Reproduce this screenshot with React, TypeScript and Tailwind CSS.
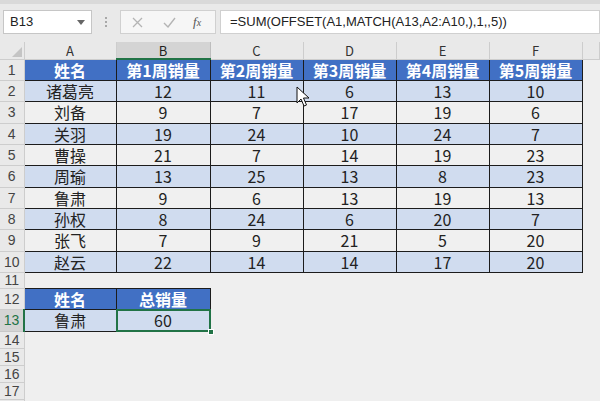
import React from 'react';

const FONT = '"Noto Sans CJK SC", "Liberation Sans", sans-serif';

const headers = ['姓名', '第1周销量', '第2周销量', '第3周销量', '第4周销量', '第5周销量'];

const rows: (string | number)[][] = [
  ['诸葛亮', 12, 11, 6, 13, 10],
  ['刘备', 9, 7, 17, 19, 6],
  ['关羽', 19, 24, 10, 24, 7],
  ['曹操', 21, 7, 14, 19, 23],
  ['周瑜', 13, 25, 13, 8, 23],
  ['鲁肃', 9, 6, 13, 19, 13],
  ['孙权', 8, 24, 6, 20, 7],
  ['张飞', 7, 9, 21, 5, 20],
  ['赵云', 22, 14, 14, 17, 20],
];

const rowHeights = ['h-[21px]', 'h-[22px]', 'h-[21px]', 'h-[21px]', 'h-[22px]', 'h-[21px]', 'h-[21px]', 'h-[22px]', 'h-[21px]'];

function RowHead({ n, active }: { n?: number; active?: boolean }) {
  return (
    <td
      className={`border-b border-r p-0 text-center text-[14px] leading-none ${
        active
          ? 'border-r-2 border-b-[#c8c8c8] border-r-[#217346] bg-[#d4d4d4] text-[#217346]'
          : 'border-[#cdcdcd] bg-[#e9e9e9] text-[#444]'
      }`}
      style={{ fontFamily: '"Liberation Sans", sans-serif' }}
    >
      {n}
    </td>
  );
}

function Blank() {
  return <td className="p-0" />;
}

function FormulaBar() {
  return (
    <div className="flex h-[42px] items-start border-t-4 border-[#d9d9d9] bg-[#e9e9e9] pt-[6px]">
      {/* name box */}
      <div className="ml-[3px] flex h-[24px] w-[89px] items-center justify-between border border-[#c6c6c6] bg-white pl-[6px] pr-[6px]">
        <span className="text-[13px] text-[#222]" style={{ fontFamily: '"Liberation Sans", sans-serif' }}>B13</span>
        <svg width="8" height="5" viewBox="0 0 8 5"><path d="M0 0h8L4 5z" fill="#666" /></svg>
      </div>
      {/* dots */}
      <div className="flex h-[24px] w-[28px] flex-col items-center justify-center gap-[2px]">
        <span className="h-[2px] w-[2px] bg-[#a8a8a8]" />
        <span className="h-[2px] w-[2px] bg-[#a8a8a8]" />
        <span className="h-[2px] w-[2px] bg-[#a8a8a8]" />
      </div>
      {/* buttons */}
      <div className="flex h-[24px] w-[96px] items-center border border-[#d0d0d0] bg-[#f6f6f6] pl-[11px]">
        <svg width="11" height="11" viewBox="0 0 11 11" className="mr-[20px]">
          <path d="M1 1l9 9M10 1l-9 9" stroke="#b4b4b4" strokeWidth="1.3" />
        </svg>
        <svg width="13" height="11" viewBox="0 0 13 11" className="mr-[17px]">
          <path d="M1 6l4 4 7-9" stroke="#b4b4b4" strokeWidth="1.4" fill="none" />
        </svg>
        <span className="text-[13px] italic text-[#555]" style={{ fontFamily: '"Liberation Serif", serif' }}>
          f<span className="text-[10px]">x</span>
        </span>
      </div>
      {/* formula */}
      <div className="ml-[4px] flex h-[24px] flex-1 items-center border border-[#d0d0d0] bg-white pl-[9px]">
        <span className="text-[13px] text-[#222]" style={{ fontFamily: '"Liberation Sans", sans-serif' }}>
          =SUM(OFFSET(A1,MATCH(A13,A2:A10,),1,,5))
        </span>
      </div>
    </div>
  );
}

export default function App() {
  return (
    <div className="relative h-[401px] w-[600px] overflow-hidden bg-[#efefef]" style={{ fontFamily: FONT }}>
      <FormulaBar />
      <table className="w-[600px] table-fixed border-collapse">
        <colgroup>
          <col className="w-[24px]" />
          <col className="w-[92px]" />
          <col className="w-[94px]" />
          <col className="w-[93px]" />
          <col className="w-[93px]" />
          <col className="w-[93px]" />
          <col className="w-[93px]" />
          <col />
        </colgroup>
        <tbody>
          {/* column headers */}
          <tr className="h-[17px]">
            <td className="relative border-b border-r border-[#cdcdcd] bg-[#e9e9e9] p-0">
              <svg width="10" height="10" viewBox="0 0 10 10" className="absolute bottom-[2px] right-[2px]">
                <path d="M10 0v10H0z" fill="#c4c4c4" />
              </svg>
            </td>
            {['A', 'B', 'C', 'D', 'E', 'F', ''].map(c => (
              <td
                key={c}
                className={`border-r p-0 text-center text-[13px] leading-none ${
                  c === 'B'
                    ? 'border-b-2 border-b-[#217346] border-r-[#bdbdbd] bg-[#d4d4d4] text-[#222]'
                    : 'border-b border-[#cdcdcd] bg-[#e9e9e9] text-[#333]'
                }`}
              >
                {c}
              </td>
            ))}
          </tr>

          {/* row 1: table header */}
          <tr className="h-[21px]">
            <RowHead n={1} />
            {headers.map(h => (
              <td key={h} className="border border-[#1c1c1c] bg-[#4170c4] p-0 text-center text-[16px] font-bold leading-none text-white">
                {h}
              </td>
            ))}
            <Blank />
          </tr>

          {rows.map((r, i) => (
            <tr key={i} className={rowHeights[i]}>
              <RowHead n={i + 2} />
              {r.map((v, j) => (
                <td
                  key={j}
                  className={`border border-[#1c1c1c] p-0 text-center text-[16px] leading-none text-[#222] ${
                    i % 2 === 0 ? 'bg-[#d0dcef]' : 'bg-[#f0f0f0]'
                  }`}
                >
                  {v}
                </td>
              ))}
              <Blank />
            </tr>
          ))}

          <tr className="h-[16px]">
            <RowHead n={11} />
            <td colSpan={7} className="p-0" />
          </tr>

          <tr className="h-[21px]">
            <RowHead n={12} />
            <td className="border border-[#1c1c1c] bg-[#4170c4] p-0 text-center text-[16px] font-bold leading-none text-white">姓名</td>
            <td className="border border-[#1c1c1c] bg-[#4170c4] p-0 text-center text-[16px] font-bold leading-none text-white">总销量</td>
            <td colSpan={5} className="p-0" />
          </tr>

          <tr className="h-[22px]">
            <RowHead n={13} active />
            <td className="border border-[#1c1c1c] bg-[#d0dcef] p-0 text-center text-[16px] leading-none text-[#222]">鲁肃</td>
            <td className="relative border border-[#1c1c1c] bg-[#d0dcef] p-0 text-center text-[16px] leading-none text-[#222]">
              60
              <div className="absolute -inset-[1px] border-2 border-[#217346]" />
              <div className="absolute -bottom-[4px] -right-[4px] h-[6px] w-[6px] border border-white bg-[#217346]" />
            </td>
            <td colSpan={5} className="p-0" />
          </tr>

          {[14, 15, 16, 17].map(n => (
            <tr key={n} className="h-[17px]">
              <RowHead n={n} />
              <td colSpan={7} className="p-0" />
            </tr>
          ))}
          <tr className="h-[17px]">
            <RowHead />
            <td colSpan={7} className="p-0" />
          </tr>
        </tbody>
      </table>

      {/* mouse pointer */}
      <svg width="13" height="21" viewBox="0 0 13 21" className="absolute left-[296px] top-[86px]">
        <path d="M1 1v16l4-4 3 7 2.5-1-3-7h5.5z" fill="#fff" stroke="#111" strokeWidth="1" strokeLinejoin="round" />
      </svg>
    </div>
  );
}
